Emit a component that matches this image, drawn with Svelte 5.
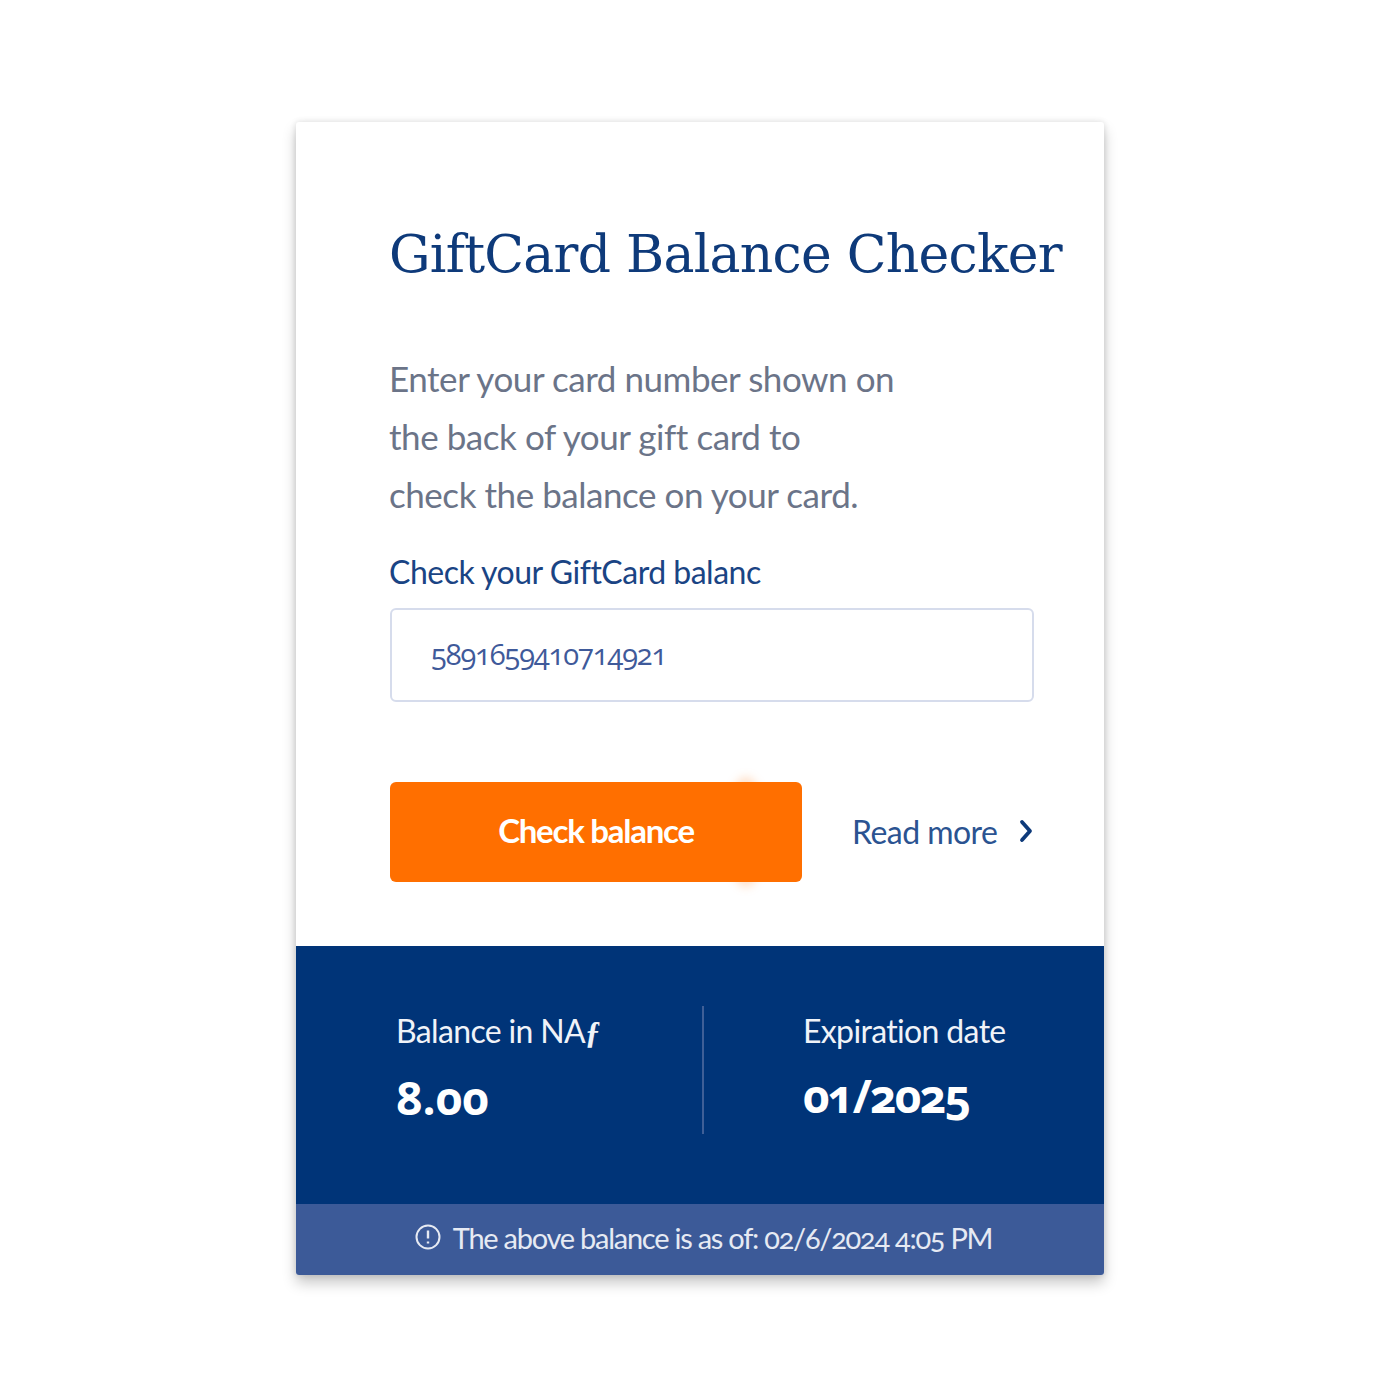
<script>
	let cardNumber = "5891659410714921";
</script>

<main>
	<section class="card">
		<div class="form">
			<h1>GiftCard Balance Checker</h1>
			<p class="intro">
				Enter your card number shown on<br />
				the back of your gift card to<br />
				check the balance on your card.
			</p>
			<div class="label">Check your GiftCard balanc</div>
			<div class="input">{cardNumber}</div>
			<div class="actions">
				<button class="check">Check balance</button>
				<a class="more" href="#more">
					Read more
					<svg width="16" height="24" viewBox="0 0 16 24" fill="none" stroke="#0e3a7a" stroke-width="3.8" stroke-linecap="round" stroke-linejoin="round">
						<path d="M4 3 L12 12 L4 21" />
					</svg>
				</a>
			</div>
		</div>
		<div class="result">
			<div class="col first">
				<div class="name">Balance in NA<i>ƒ</i></div>
				<div class="value">8.00</div>
			</div>
			<div class="col second">
				<div class="name">Expiration date</div>
				<div class="value date">01/2025</div>
			</div>
		</div>
		<div class="note">
			<svg width="26" height="26" viewBox="0 0 26 26" fill="none" stroke="#e6eaf3" stroke-width="2">
				<circle cx="13" cy="13" r="11.5" />
				<path d="M13 6.5 V14.5 M13 17.5 V19.5" stroke-width="2.4" />
			</svg>
			<span>The above balance is as of: 02/6/2024 4:05 PM</span>
		</div>
	</section>
</main>

<style>
	:global(body) {
		background: #fff;
	}

	main {
		height: 1400px;
		padding-top: 122px;
		box-sizing: border-box;
		font-family: "Lato", "Open Sans", sans-serif;
	}

	.card {
		width: 808px;
		margin: 0 auto;
		background: #fff;
		border-radius: 3px;
		box-shadow: 0 8px 14px rgba(0, 0, 0, 0.22), 0 0 6px rgba(0, 0, 0, 0.12);
		isolation: isolate;
	}

	.form {
		height: 824px;
		padding: 94px 0 0 94px;
		box-sizing: border-box;
	}

	h1 {
		margin: 0 0 0 -1px;
		font-family: "DejaVu Serif", serif;
		font-weight: 400;
		font-size: 52px;
		line-height: 76px;
		letter-spacing: -0.75px;
		color: #0e3a7a;
		white-space: nowrap;
	}

	.intro {
		margin: 57px 0 0 -1px;
		font-size: 35px;
		line-height: 58px;
		letter-spacing: -0.45px;
		color: #6b7488;
	}

	.label {
		margin: 29px 0 0 -1px;
		font-size: 32px;
		line-height: 40px;
		letter-spacing: -0.5px;
		color: #1a4484;
	}

	.input {
		margin-top: 16px;
		width: 644px;
		height: 94px;
		box-sizing: border-box;
		padding: 0 0 3px 39px;
		display: flex;
		align-items: center;
		border: 2px solid #d6dcec;
		border-radius: 6px;
		font-family: "Open Sans", sans-serif;
		font-feature-settings: "onum";
		font-size: 29px;
		letter-spacing: -1.1px;
		color: #3f5a9a;
	}

	.actions {
		margin-top: 80px;
		display: flex;
		align-items: center;
		gap: 50px;
	}

	.check {
		position: relative;
		width: 412px;
		height: 100px;
		padding: 0 0 4px;
		border: none;
		border-radius: 6px;
		background: #ff6f00;
		color: #fff;
		font-family: inherit;
		font-size: 33px;
		font-weight: 700;
		letter-spacing: -1.25px;
	}

	/* faint ripple that pokes out above and below the button */
	.check::before {
		content: "";
		position: absolute;
		left: 336px;
		top: -5px;
		width: 40px;
		height: 110px;
		z-index: -1;
		border-radius: 50%;
		background: rgba(255, 111, 0, 0.22);
		filter: blur(5px);
	}

	.more {
		display: flex;
		align-items: center;
		gap: 21px;
		padding-bottom: 2px;
		font-size: 32px;
		letter-spacing: -0.55px;
		color: #2b5391;
		text-decoration: none;
	}

	.result {
		height: 258px;
		background: #003478;
		color: #fff;
		display: grid;
		grid-template-columns: 408px 1fr;
		padding-top: 60px;
		box-sizing: border-box;
	}

	.col {
		height: 128px;
	}

	.first {
		padding-left: 100px;
		border-right: 2px solid #3f5f97;
	}

	.second {
		padding-left: 99px;
	}

	.name {
		font-size: 32px;
		line-height: 50px;
		letter-spacing: -0.65px;
		color: #f0f3f8;
	}

	.name i {
		font-family: "Liberation Serif", serif;
		font-weight: 700;
		font-size: 31px;
	}

	.value {
		margin-top: 9px;
		font-family: "Open Sans", sans-serif;
		font-feature-settings: "onum";
		font-weight: 700;
		font-size: 46px;
		line-height: 60px;
	}

	.date {
		letter-spacing: -1.7px;
	}

	.note {
		height: 71px;
		padding: 0 0 5px 7px;
		box-sizing: border-box;
		background: #3c5a98;
		border-radius: 0 0 3px 3px;
		display: flex;
		align-items: center;
		justify-content: center;
		gap: 12px;
		font-size: 29px;
		letter-spacing: -1.25px;
		color: #e6eaf3;
		font-feature-settings: "onum";
	}
</style>
